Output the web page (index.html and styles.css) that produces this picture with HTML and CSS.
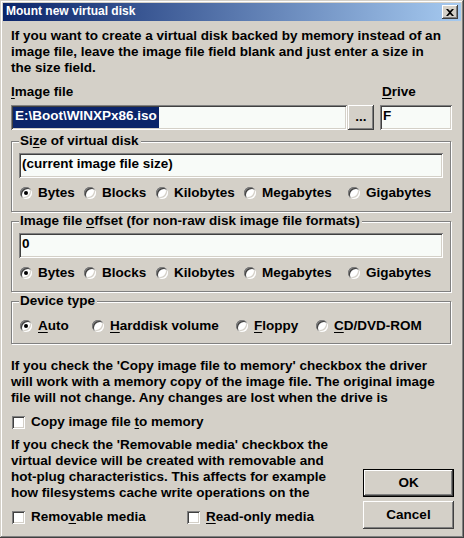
FILE: index.html
```html
<!DOCTYPE html>
<html>
<head>
<meta charset="utf-8">
<link rel="stylesheet" href="styles.css">
</head>
<body>
<div class="window">
  <div class="titlebar">
    <span class="title">Mount new virtual disk</span>
    <span class="close"><svg width="8" height="7" viewBox="0 0 8 7"><path d="M0 0h2l2 2 2-2h2L5 3.5 8 7H6L4 5 2 7H0l3-3.5z" fill="#000"/></svg></span>
  </div>
  <div class="content">
    <p class="intro">If you want to create a virtual disk backed by memory instead of an<br>image file, leave the image file field blank and just enter a size in<br>the size field.</p>

    <div class="file-row">
      <div class="file-col">
        <span class="lbl"><u>I</u>mage file</span>
        <div class="file-inputs">
          <div class="field file"><span class="sel">E:\Boot\WINXPx86.iso</span></div>
          <button class="btn browse">...</button>
        </div>
      </div>
      <div class="drive-col">
        <span class="lbl drive-lbl"><u>D</u>rive</span>
        <div class="field drive">F</div>
      </div>
    </div>

    <div class="group first">
      <div class="legend">Si<u>z</u>e of virtual disk</div>
      <div class="field wide">(current image file size)</div>
      <div class="radio-row units">
        <span class="opt"><span class="radio on"></span>Bytes</span>
        <span class="opt"><span class="radio"></span>Blocks</span>
        <span class="opt"><span class="radio"></span>Kilobytes</span>
        <span class="opt"><span class="radio"></span>Megabytes</span>
        <span class="opt"><span class="radio"></span>Gigabytes</span>
      </div>
    </div>

    <div class="group">
      <div class="legend">Image file <u>o</u>ffset (for non-raw disk image file formats)</div>
      <div class="field wide">0</div>
      <div class="radio-row units">
        <span class="opt"><span class="radio on"></span>Bytes</span>
        <span class="opt"><span class="radio"></span>Blocks</span>
        <span class="opt"><span class="radio"></span>Kilobytes</span>
        <span class="opt"><span class="radio"></span>Megabytes</span>
        <span class="opt"><span class="radio"></span>Gigabytes</span>
      </div>
    </div>

    <div class="group device">
      <div class="legend">Device type</div>
      <div class="radio-row types">
        <span class="opt"><span class="radio on"></span><span><u>A</u>uto</span></span>
        <span class="opt"><span class="radio"></span><span><u>H</u>arddisk volume</span></span>
        <span class="opt"><span class="radio"></span><span><u>F</u>loppy</span></span>
        <span class="opt"><span class="radio"></span><span><u>C</u>D/DVD-ROM</span></span>
      </div>
    </div>

    <p class="note copy-note">If you check the 'Copy image file to memory' checkbox the driver<br>will work with a memory copy of the image file. The original image<br>file will not change. Any changes are lost when the drive is</p>

    <div class="check-row copy-row"><span class="check"></span><span>Copy image file <u>t</u>o memory</span></div>

    <div class="bottom">
      <div class="bottom-left">
        <p class="note rem-note">If you check the 'Removable media' checkbox the<br>virtual device will be created with removable and<br>hot-plug characteristics. This affects for example<br>how filesystems cache write operations on the</p>
        <div class="checks">
          <div class="check-row"><span class="check"></span><span>Remo<u>v</u>able media</span></div>
          <div class="check-row"><span class="check"></span><span><u>R</u>ead-only media</span></div>
        </div>
      </div>
      <div class="buttons">
        <button class="btn default">OK</button>
        <button class="btn">Cancel</button>
      </div>
    </div>
  </div>
</div>
</body>
</html>
```
FILE: styles.css
```css
html, body {
  margin: 0;
  padding: 0;
  background: #d4d0c8;
}
body {
  font-family: "Liberation Sans", Arial, sans-serif;
  font-weight: bold;
  font-size: 13.5px;
  line-height: 16px;
  color: #000;
}
u { text-decoration: underline; text-underline-offset: 2px; }

.window {
  width: 464px;
  height: 538px;
  box-sizing: border-box;
  padding: 3px;
  background: #d4d0c8;
  box-shadow: inset -1px -1px #404040, inset 1px 1px #d4d0c8, inset -2px -2px #808080, inset 2px 2px #fff;
  overflow: hidden;
}

.titlebar {
  height: 18px;
  display: flex;
  justify-content: space-between;
  align-items: flex-start;
  background: linear-gradient(to right, #0a246a, #a6caf0);
  color: #fff;
}
.title {
  font-size: 12px;
  line-height: 16px;
  padding-left: 3px;
}
.close {
  width: 16px;
  height: 14px;
  margin: 2px 3px 0 0;
  background: #d4d0c8;
  box-shadow: inset -1px -1px #404040, inset 1px 1px #fff, inset -2px -2px #808080, inset 2px 2px #d4d0c8;
  display: flex;
  align-items: center;
  justify-content: center;
  padding-right: 1px;
  box-sizing: border-box;
}
.close svg { display: block; }

.content {
  padding: 7px 7px 0 8px;
}
.intro {
  margin: 0;
  white-space: nowrap;
}

.file-row {
  display: flex;
  margin-top: 8px;
}
.file-col, .drive-col {
  display: flex;
  flex-direction: column;
}
.drive-col { margin-left: 6px; }
.lbl {
  display: block;
  height: 16px;
  margin-bottom: 5px;
  white-space: nowrap;
}
.drive-lbl { padding-left: 2px; }
.file-inputs { display: flex; }

.field {
  height: 25px;
  box-sizing: border-box;
  background: #f8fbf8;
  box-shadow: inset 1px 1px #808080, inset -1px -1px #fff, inset 2px 2px #404040, inset -2px -2px #d4d0c8;
  padding: 3px 0 0 3px;
  white-space: nowrap;
  overflow: hidden;
}
.field.file {
  width: 336px;
  padding: 2px 0 0 2px;
}
.sel {
  display: inline-block;
  height: 21px;
  box-sizing: border-box;
  padding: 1px 2px 0 2px;
  background: #0a246a;
  color: #fff;
  vertical-align: top;
}
.field.drive { width: 72px; }

.btn {
  font: inherit;
  color: #000;
  background: #d4d0c8;
  border: 0;
  padding: 0;
  margin: 0;
  box-sizing: border-box;
  box-shadow: inset -1px -1px #404040, inset 1px 1px #fff, inset -2px -2px #808080, inset 2px 2px #d4d0c8;
}
.browse {
  width: 26px;
  height: 25px;
  margin-left: 1px;
  line-height: 16px;
  padding-bottom: 2px;
}

.group {
  width: 440px;
  box-sizing: border-box;
  margin-top: 9px;
  border: 1px solid #808080;
  box-shadow: 1px 1px 0 #fff, inset 1px 1px 0 #fff;
  padding: 0 0 10px 7px;
}
.group.first { margin-top: 11px; }
.group.device { padding-bottom: 9px; }
.legend {
  width: fit-content;
  height: 16px;
  margin-top: -9px;
  padding: 0 2px 0 1px;
  background: #d4d0c8;
  white-space: nowrap;
}
.field.wide {
  width: 424px;
  margin-top: 4px;
}

.radio-row {
  display: grid;
  height: 16px;
  margin-top: 7px;
  padding-left: 1px;
}
.radio-row.units { grid-template-columns: 64px 72px 88px 104px auto; }
.radio-row.types { grid-template-columns: 72px 144px 80px auto; margin-top: 9px; }
.opt {
  display: flex;
  align-items: center;
  gap: 6px;
  white-space: nowrap;
}
.radio {
  flex: none;
  position: relative;
  width: 12px;
  height: 12px;
  border-radius: 50%;
  background: #fff;
  box-shadow: inset 1px 1px #808080, inset -1px -1px #fff, inset 2px 2px #404040, inset -2px -2px #d4d0c8;
}
.radio.on::after {
  content: "";
  position: absolute;
  left: 4px;
  top: 4px;
  width: 4px;
  height: 4px;
  border-radius: 50%;
  background: #000;
}

.note {
  margin: 0;
  white-space: nowrap;
}
.copy-note {
  margin-top: 14px;
  height: 48px;
}
.rem-note { height: 64px; }

.check-row {
  display: flex;
  align-items: center;
  gap: 6px;
  height: 16px;
  padding-left: 1px;
  white-space: nowrap;
}
.copy-row { margin-top: 8px; }
.check {
  flex: none;
  width: 13px;
  height: 13px;
  background: #fff;
  box-shadow: inset 1px 1px #808080, inset -1px -1px #fff, inset 2px 2px #404040, inset -2px -2px #d4d0c8;
}

.bottom {
  display: flex;
  justify-content: space-between;
  margin-top: 7px;
}
.checks {
  display: grid;
  grid-template-columns: 176px auto;
  margin-top: 8px;
}
.checks .check-row { padding-left: 1px; }
.checks .check-row + .check-row { padding-left: 0; }

.buttons {
  width: 91px;
  padding-top: 32px;
  display: flex;
  flex-direction: column;
  gap: 4px;
}
.buttons .btn {
  height: 28px;
  width: 91px;
  line-height: 16px;
}
.btn.default {
  border: 1px solid #000;
}
```
